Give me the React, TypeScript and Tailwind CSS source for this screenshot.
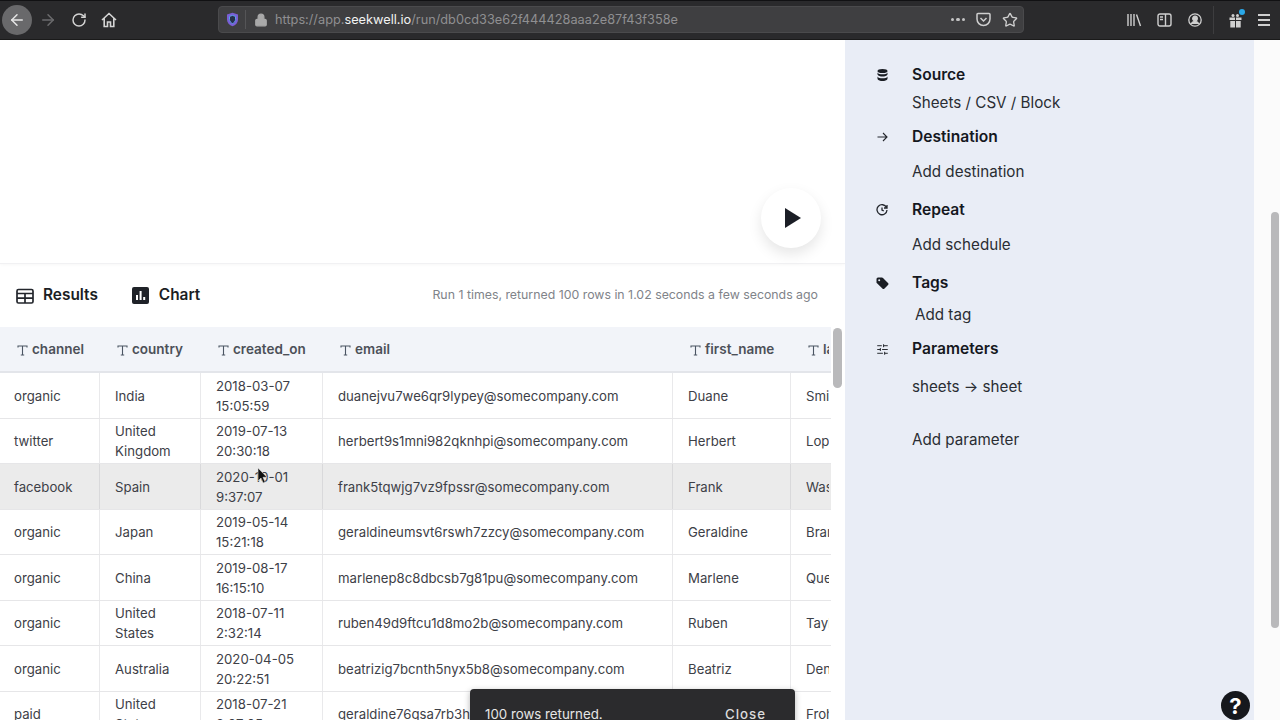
import React from "react";
import { ArrowLeft, ArrowRight, RotateCw, Lock, Star, SlidersHorizontal } from "lucide-react";

const rows = [
  ["organic", "India", "2018-03-07 15:05:59", "duanejvu7we6qr9lypey@somecompany.com", "Duane", "Smith"],
  ["twitter", "United Kingdom", "2019-07-13 20:30:18", "herbert9s1mni982qknhpi@somecompany.com", "Herbert", "Lopez"],
  ["facebook", "Spain", "2020-10-01 9:37:07", "frank5tqwjg7vz9fpssr@somecompany.com", "Frank", "Washington"],
  ["organic", "Japan", "2019-05-14 15:21:18", "geraldineumsvt6rswh7zzcy@somecompany.com", "Geraldine", "Brandt"],
  ["organic", "China", "2019-08-17 16:15:10", "marlenep8c8dbcsb7g81pu@somecompany.com", "Marlene", "Quentin"],
  ["organic", "United States", "2018-07-11 2:32:14", "ruben49d9ftcu1d8mo2b@somecompany.com", "Ruben", "Taylor"],
  ["organic", "Australia", "2020-04-05 20:22:51", "beatrizig7bcnth5nyx5b8@somecompany.com", "Beatriz", "Dennis"],
  ["paid", "United States", "2018-07-21 2:07:05", "geraldine76gsa7rb3h@somecompany.com", "Geraldine", "Frohlich"],
];

const headers = ["channel", "country", "created_on", "email", "first_name", "last_name"];
const cols = "grid grid-cols-[100px_101px_122px_350px_118px_40px] w-[831px]";

function TGlyph() {
  return (
    <svg width="11" height="11" viewBox="0 0 11 11" fill="none" stroke="#4b5563" strokeWidth="1.1" className="shrink-0 mt-[2px]">
      <path d="M1 2.6V1h9v1.6M5.5 1v9M3.8 10h3.4" />
    </svg>
  );
}

function SideHead({ icon, label }: { icon: React.ReactNode; label: string }) {
  return (
    <div className="flex items-center h-[20px]">
      <div className="w-[12px] h-[14px] flex items-center justify-center ml-[-1px] mr-[24px] shrink-0">{icon}</div>
      <span className="text-[15.6px] font-semibold text-[#15181e]">{label}</span>
    </div>
  );
}

export default function App() {
  return (
    <div className="relative w-[1280px] h-[720px] overflow-hidden bg-white font-['Inter',sans-serif] text-[#2b2f36]">
      {/* Browser toolbar */}
      <div className="h-[40px] bg-[#2a2a2c] flex items-center text-[#c8c8c8] relative border-t border-b border-t-[#111113] border-b-[#1a1a1a]">
        <div className="w-[30px] h-[30px] ml-[2px] rounded-full bg-[#69696b] flex items-center justify-center">
          <ArrowLeft size={18} color="#e6e6e6" strokeWidth={2} />
        </div>
        <ArrowRight size={18} color="#6b6b6d" strokeWidth={2} className="ml-[7px]" />
        <RotateCw size={16} color="#d4d4d4" strokeWidth={2.2} className="ml-[14px]" />
        <svg width="16" height="16" viewBox="0 0 16 16" fill="none" stroke="#d4d4d4" strokeWidth="1.6" className="ml-[14px]">
          <path d="M1 8 8 1.5 15 8M3.2 6.5V14.5h3.3V10h3v4.5h3.3V6.5" />
        </svg>
        <div className="w-[806px] h-[27px] bg-[#3f3f41] rounded-[4px] flex items-center border border-[#4a4a4c] absolute left-[218px] top-[5px] box-border">
          <svg width="13" height="15" viewBox="0 0 13 15" className="ml-[7px] shrink-0">
            <path d="M6.5.7 12 2.4v5c0 3.3-2.3 5.6-5.5 6.9C3.3 13 1 10.700 1 7.400v-5Z" fill="#7a5fd6" />
            <path d="M6.500 3.400 9.500 4.400v3c0 1.900-1.300 3.300-3 4.100-1.700-.8-3-2.200-3-4.100v-3Z" fill="#26304a" stroke="#5aa0e8" strokeWidth="1" />
          </svg>
          <div className="w-px h-[19px] bg-[#555557] ml-[6px]" />
          <Lock size={14} color="#a9a9a9" fill="#a9a9a9" strokeWidth={2} className="ml-[8px] shrink-0" />
          <div className="ml-[7px] text-[12.75px] text-[#8f8f91] whitespace-nowrap">
            https://app.<span className="text-[#f2f2f2]">seekwell.io</span>/run/db0cd33e62f444428aaa2e87f43f358e
          </div>
          <div className="ml-auto flex items-center">
            <div className="flex gap-[2px] mr-[11px]">
              <span className="w-[3.500px] h-[3.500px] rounded-full bg-[#c4c4c4]" />
              <span className="w-[3.500px] h-[3.500px] rounded-full bg-[#c4c4c4]" />
              <span className="w-[3.500px] h-[3.500px] rounded-full bg-[#c4c4c4]" />
            </div>
            <svg width="15" height="15" viewBox="0 0 15 15" fill="none" stroke="#cfcfcf" strokeWidth="1.500" className="mr-[11px]">
              <path d="M2 1.500h11a1 1 0 0 1 1 1V7a6.500 6.500 0 0 1-13 0V2.500a1 1 0 0 1 1-1Z" />
              <path d="m4.500 6 3 3 3-3" />
            </svg>
            <Star size={16} color="#cfcfcf" strokeWidth={2} className="mr-[5px]" />
          </div>
        </div>
        <div className="absolute left-[1126px] top-[11px] flex items-center h-[16px] text-[#cfcfcf]">
          <svg width="16" height="16" viewBox="0 0 16 16" fill="none" stroke="#cfcfcf" strokeWidth="1.400">
            <path d="M2 2v12M5 2v12M8 2v12M10.500 2.500 14.500 14" />
          </svg>
          <svg width="15" height="14" viewBox="0 0 15 14" fill="none" stroke="#cfcfcf" strokeWidth="1.400" className="ml-[15px]">
            <rect x="1" y="1" width="13" height="12" rx="2" />
            <path d="M8.500 1v12M3 4h3M3 6.500h3" />
          </svg>
          <svg width="14" height="14" viewBox="0 0 14 14" fill="none" stroke="#cfcfcf" strokeWidth="1.300" className="ml-[16px]">
            <circle cx="7" cy="7" r="6.200" />
            <circle cx="7" cy="5.500" r="2.300" fill="#cfcfcf" />
            <path d="M3 11c1-2 2.500-2.500 4-2.500s3 .5 4 2.500" fill="#cfcfcf" />
          </svg>
          <div className="w-px h-[28px] bg-[#3d3d3f] ml-[11px]" />
          <div className="relative ml-[14px]">
            <svg width="15" height="15" viewBox="0 0 14 15" fill="#d0d0d0">
              <path d="M1 4.500h5.500V7H1ZM7.500 4.500H13V7H7.500ZM1.800 8h4.700v6.500H1.800ZM7.500 8h4.700v6.500H7.500Z" />
              <circle cx="4.500" cy="2.500" r="1.500" />
              <circle cx="9" cy="2.500" r="1.500" />
            </svg>
            <span className="absolute top-[-4px] right-[-2px] w-[6px] h-[6px] rounded-full bg-[#2aa8e8]" />
          </div>
          <div className="ml-[15px] flex flex-col gap-[3px]">
            <span className="w-[12px] h-[2px] bg-[#cfcfcf]" />
            <span className="w-[12px] h-[2px] bg-[#cfcfcf]" />
            <span className="w-[12px] h-[2px] bg-[#cfcfcf]" />
          </div>
        </div>
      </div>

      <div className="flex h-[680px]">
        {/* Main column */}
        <div className="w-[845px] shrink-0 flex flex-col">
          <div className="h-[224px] shrink-0 border-b border-[#f1f1f3] shadow-[0_1px_3px_rgba(0,0,0,0.03)]" />
          <div className="h-[63px] shrink-0 flex items-center pl-[16px] pr-[27px]">
            <svg width="18" height="16" viewBox="0 0 18 16" fill="none" stroke="#23262c" strokeWidth="1.700">
              <rect x="1" y="1.500" width="16" height="13.500" rx="1.500" />
              <path d="M1 5.500h16M1 10.200h16M9 5.500V15" />
            </svg>
            <span className="ml-[9px] mb-[2px] text-[15.4px] font-semibold text-[#1b1e24]">Results</span>
            <svg width="17" height="17" viewBox="0 0 17 17" className="ml-[34px]">
              <rect width="17" height="17" rx="2" fill="#1f2228" />
              <path d="M4 8h2v5H4ZM7.600 4h2v9h-2ZM11.200 10h2v3h-2Z" fill="#fff" />
            </svg>
            <span className="ml-[10px] mb-[2px] text-[15.4px] font-semibold text-[#1b1e24]">Chart</span>
            <span className="ml-auto text-[12.33px] text-[#808389]">Run 1 times, returned 100 rows in 1.02 seconds a few seconds ago</span>
          </div>

          <div className="w-[831px] flex-1 overflow-hidden">
            <div className={`${cols} h-[46.400px] bg-[#f2f4f9] border-b-2 border-[#e3e5ea]`}>
              {headers.map((h, j) => (
                <div key={h} className="flex items-center gap-[4px] pl-[17px] text-[13.5px] font-semibold text-[#4c5058] whitespace-nowrap overflow-hidden">
                  <TGlyph />
                  <span className={j === 5 ? "w-[6px] overflow-hidden" : ""}>{h}</span>
                </div>
              ))}
            </div>
            {rows.map((r, i) => (
              <div key={i} className={`${cols} h-[45.500px] border-b border-[#e6e6e8] ${i === 2 ? "bg-[#ebebeb]" : "bg-white"}`}>
                {r.map((c, j) => (
                  <div
                    key={j}
                    className={`flex items-center text-[13.2px] leading-[20px] text-[#3d4047] overflow-hidden ${j === 0 ? "pl-[14px]" : "pl-[15px]"} ${j === 5 ? "whitespace-nowrap" : i === 2 ? "border-r border-[#d9d9db]" : "border-r border-[#e9e9eb]"} ${j === 2 ? "pr-[20px]" : j === 5 ? "" : "pr-[10px]"}`}
                  >
                    <span className={j === 5 ? "block w-[23px] overflow-hidden" : ""}>{c}</span>
                  </div>
                ))}
              </div>
            ))}
          </div>
        </div>

        {/* Side panel */}
        <div className="w-[409px] shrink-0 bg-[#e9edf6] pl-[32px] pt-[25px] text-[#2a2d33]">
          <SideHead
            icon={
              <svg width="11" height="12" viewBox="0 0 11 12" fill="#1b1e24">
                <ellipse cx="5.500" cy="2" rx="5" ry="2" />
                <path d="M.5 3.400C1.200 4.800 3.300 5.300 5.500 5.300s4.300-.5 5-1.900v2C9.800 6.900 7.700 7.400 5.500 7.400S1.200 6.900.5 5.400ZM.5 7.400C1.200 8.800 3.300 9.300 5.500 9.300s4.300-.5 5-1.900V10c-.7 1.400-2.800 2-5 2s-4.300-.6-5-2Z" />
              </svg>
            }
            label="Source"
          />
          <div className="ml-[35px] mt-[8px] text-[15.2px] leading-[20px]">Sheets / CSV / Block</div>
          <div className="mt-[14px]">
            <SideHead
              icon={
                <svg width="11" height="10" viewBox="0 0 11 10" fill="none" stroke="#23262c" strokeWidth="1.100">
                  <path d="M.5 5h9.500M6 1l4 4-4 4" />
                </svg>
              }
              label="Destination"
            />
          </div>
          <div className="ml-[35px] mt-[15px] text-[15.2px] leading-[20px]">Add destination</div>
          <div className="mt-[18px]">
            <SideHead
              icon={
                <svg width="12" height="12" viewBox="0 0 12 12" fill="none" stroke="#23262c" strokeWidth="1.300">
                  <path d="M10.500 3.500A5 5 0 1 0 11 6M11 1v3H8M6 3.500V6l1.800 1" />
                </svg>
              }
              label="Repeat"
            />
          </div>
          <div className="ml-[35px] mt-[15px] text-[15.2px] leading-[20px]">Add schedule</div>
          <div className="mt-[18px]">
            <SideHead
              icon={
                <svg width="13" height="13" viewBox="0 0 13 13" fill="#1b1e24" className="shrink-0">
                  <path d="M.5 2A1.500 1.500 0 0 1 2 .5h4a1.500 1.500 0 0 1 1 .4l5 5a1.500 1.500 0 0 1 0 2.100l-3.500 3.500a1.500 1.500 0 0 1-2.100 0l-5.400-5.200A1.500 1.500 0 0 1 .5 5.800Z" />
                  <circle cx="3.200" cy="3.200" r="1" fill="#e9edf6" />
                </svg>
              }
              label="Tags"
            />
          </div>
          <div className="ml-[38px] mt-[12px] text-[15.2px] leading-[20px]">Add tag</div>
          <div className="mt-[14px]">
            <SideHead icon={<SlidersHorizontal size={13} color="#23262c" strokeWidth={1.800} className="shrink-0" />} label="Parameters" />
          </div>
          <div className="ml-[35px] mt-[18px] text-[15.2px] leading-[20px]">sheets → sheet</div>
          <div className="ml-[35px] mt-[33px] text-[15.2px] leading-[20px]">Add parameter</div>
        </div>

        <div className="flex-1 bg-[#fbfbfb]" />
      </div>

      {/* Overlays */}
      <div className="absolute left-[761px] top-[188px] w-[60px] h-[60px] rounded-full bg-white shadow-[0_6px_14px_rgba(0,0,0,0.10)] flex items-center justify-center">
        <svg width="16" height="20" viewBox="0 0 16 20" className="ml-[3px]">
          <path d="M0 0 16 10 0 20Z" fill="#1b1e26" />
        </svg>
      </div>
      <div className="absolute left-[833px] top-[328px] w-[9px] h-[60px] rounded-full bg-[#b9b9bb]" />
      <div className="absolute left-[1271px] top-[212px] w-[8px] h-[416px] rounded-full bg-[#b9b9bb]" />
      <div className="absolute left-[470px] top-[689px] w-[325px] h-[48px] bg-[#2b2b2d] rounded-[4px] shadow-[0_2px_6px_rgba(0,0,0,0.3)] flex items-start pt-[15px] pl-[15px] pr-[29px] justify-between text-[13.3px] leading-[20px]">
        <span className="text-[#e6e6e6]">100 rows returned.</span>
        <span className="text-[#dcdcdc] font-medium tracking-[1px]">Close</span>
      </div>
      <div className="absolute left-[1221px] top-[691px] w-[29px] h-[29px] rounded-full bg-[#16181d] flex items-center justify-center text-white text-[22px] font-bold leading-none">?</div>
      <svg width="11" height="17" viewBox="0 0 11 17" className="absolute left-[257px] top-[467px]">
        <path d="M1 1v13l3-3 2.200 5 2-.9L6 10.300h4Z" fill="#111" stroke="#ddd" strokeWidth="0.600" />
      </svg>
    </div>
  );
}
